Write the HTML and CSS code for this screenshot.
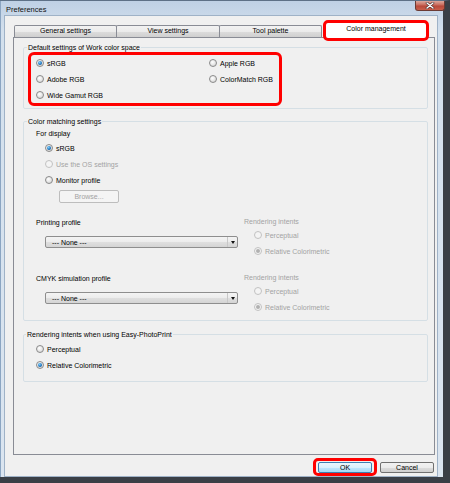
FILE: index.html
```html
<!DOCTYPE html>
<html lang="en">
<head>
    <meta charset="UTF-8">
    <title>Preferences</title>
    <link rel="stylesheet" href="styles.css">
</head>
<body>
    <div class="window">
        <div class="titlebar">
            <span class="title">Preferences</span>
            <span class="close-btn">
                <svg width="10" height="7" viewBox="0 0 10 7">
                    <path d="M2 1 L8 6 M8 1 L2 6" stroke="#4a2a2a" stroke-width="2.6" stroke-linecap="round"/>
                    <path d="M2 1 L8 6 M8 1 L2 6" stroke="#fff" stroke-width="1.4" stroke-linecap="round"/>
                </svg>
            </span>
        </div>

        <div class="client">
            <div class="tabs">
                <div class="tab tab-general">General settings</div>
                <div class="tab tab-view">View settings</div>
                <div class="tab tab-tool">Tool palette</div>
                <div class="tab tab-color active marked">Color management</div>
            </div>

            <div class="panel">
                <fieldset class="group group-work">
                    <legend>Default settings of Work color space</legend>
                    <div class="highlight-box">
                        <div class="work-grid">
                            <div class="option"><span class="radio checked"></span>sRGB</div>
                            <div class="option"><span class="radio"></span>Apple RGB</div>
                            <div class="option"><span class="radio"></span>Adobe RGB</div>
                            <div class="option"><span class="radio"></span>ColorMatch RGB</div>
                            <div class="option"><span class="radio"></span>Wide Gamut RGB</div>
                        </div>
                    </div>
                </fieldset>

                <fieldset class="group group-matching">
                    <legend>Color matching settings</legend>
                    <div class="caption">For display</div>
                    <div class="indent">
                        <div class="option"><span class="radio checked"></span>sRGB</div>
                        <div class="option disabled"><span class="radio"></span>Use the OS settings</div>
                        <div class="option"><span class="radio"></span>Monitor profile</div>
                        <button class="btn btn-browse" disabled>Browse...</button>
                    </div>

                    <div class="profile-row">
                        <div class="profile-left">
                            <div class="caption">Printing profile</div>
                            <div class="combo"><span class="combo-text">--- None ---</span><span class="combo-arrow"></span></div>
                        </div>
                        <div class="profile-right disabled">
                            <div class="intent-caption">Rendering intents</div>
                            <div class="intent-list">
                                <div class="option"><span class="radio"></span>Perceptual</div>
                                <div class="option"><span class="radio checked"></span>Relative Colorimetric</div>
                            </div>
                        </div>
                    </div>

                    <div class="profile-row">
                        <div class="profile-left">
                            <div class="caption">CMYK simulation profile</div>
                            <div class="combo"><span class="combo-text">--- None ---</span><span class="combo-arrow"></span></div>
                        </div>
                        <div class="profile-right disabled">
                            <div class="intent-caption">Rendering intents</div>
                            <div class="intent-list">
                                <div class="option"><span class="radio"></span>Perceptual</div>
                                <div class="option"><span class="radio checked"></span>Relative Colorimetric</div>
                            </div>
                        </div>
                    </div>
                </fieldset>

                <fieldset class="group group-easy">
                    <legend>Rendering intents when using Easy-PhotoPrint</legend>
                    <div class="option"><span class="radio"></span>Perceptual</div>
                    <div class="option"><span class="radio checked"></span>Relative Colorimetric</div>
                </fieldset>
            </div>

            <div class="buttons">
                <button class="btn btn-default marked">OK</button>
                <button class="btn">Cancel</button>
            </div>
        </div>
    </div>
</body>
</html>
```

FILE: styles.css
```css
* {
    box-sizing: border-box;
}
body {
    margin: 0;
    font-family: "Liberation Sans", Arial, sans-serif;
    font-size: 7px;
    color: #000;
}
.window {
    width: 450px;
    height: 483px;
    display: flex;
    flex-direction: column;
    background: linear-gradient(#bfd1e5, #d3e0ed 30px, #dbe5f0);
    border-top: 1px solid #5e7187;
    border-right: 7px solid #3a3f46;
    border-bottom: 6px solid #3a3f46;
    box-shadow: inset 1px 0 #8ba5c2;
}
.titlebar {
    flex: none;
    height: 15px;
    display: flex;
    align-items: flex-start;
}
.title {
    padding: 4px 0 0 6px;
    font-size: 7.5px;
    line-height: 9px;
    color: #111;
}
.close-btn {
    margin-left: auto;
    margin-right: -2px;
    width: 30px;
    height: 10px;
    display: flex;
    align-items: center;
    justify-content: center;
    border: 1px solid #6b3b34;
    border-top: none;
    border-radius: 0 0 3px 3px;
    background: linear-gradient(#dca89d, #c86a5c 45%, #b8483a 55%, #c9604c);
}
.client {
    flex: 1;
    margin: 0 6px 1px 5px;
    padding-top: 6px;
    display: flex;
    flex-direction: column;
    background: #f0f0f0;
    box-shadow: 0 0 0 1px #9fb2c7;
}

/* tab strip */
.tabs {
    position: relative;
    z-index: 1;
    display: flex;
    align-items: flex-end;
    height: 15px;
    margin-left: 9px;
}
.tab {
    height: 12px;
    border: 1px solid #898c95;
    border-bottom: none;
    border-radius: 2px 2px 0 0;
    background: linear-gradient(#f2f2f2, #ebebeb 50%, #dddddd 50%, #cfcfcf);
    text-align: center;
    line-height: 9px;
}
.tab + .tab {
    margin-left: -1px;
}
.tab-general {
    width: 103px;
}
.tab-view {
    width: 104px;
}
.tab-tool {
    width: 103px;
}
.tab.active {
    width: 102px;
    height: 16px;
    margin-left: 3px;
    margin-bottom: -1px;
    background: #fff;
    line-height: 12px;
}
.marked {
    position: relative;
}
.marked::after {
    content: "";
    position: absolute;
    left: -3px;
    right: -3px;
    top: -3px;
    bottom: -3px;
    border: 3px solid #f00;
    border-radius: 5px;
}

.panel {
    flex: none;
    height: 418px;
    margin: 0 2px 0 8px;
    padding: 5px 6px 0 9px;
    border: 1px solid #898c95;
    background: #f0f0f0;
}

/* group boxes */
.group {
    margin: 0;
    padding: 0;
    min-width: 0;
    border: 1px solid #d5dfe5;
    border-radius: 2px;
}
.group legend {
    margin-left: 3px;
    padding: 0 1px;
    height: 9px;
    line-height: 9px;
}
.group-work {
    padding-bottom: 2px;
}
.group-matching {
    margin-top: 8px;
    padding: 2px 0 5px 12px;
}
.group-matching legend {
    margin-left: -9px;
}
.group-easy {
    margin-top: 9px;
    padding: 2px 0 8px 12px;
}
.group-easy legend {
    margin-left: -10px;
}

.highlight-box {
    width: 254px;
    margin-left: 4px;
    padding-left: 5px;
    border: 3px solid #f00;
    border-radius: 6px;
}
.work-grid {
    display: grid;
    grid-template-columns: 173px 1fr;
}

.option {
    height: 16px;
    display: flex;
    align-items: center;
    gap: 3px;
    white-space: nowrap;
}
.radio {
    position: relative;
    flex: none;
    width: 8px;
    height: 8px;
    border: 1px solid #8a8a8a;
    border-radius: 50%;
    background: radial-gradient(circle at 40% 35%, #ffffff, #e2e2e2 60%, #c9c9c9);
}
.radio.checked::after {
    content: "";
    position: absolute;
    left: 1px;
    top: 1px;
    width: 4px;
    height: 4px;
    border-radius: 50%;
    background: radial-gradient(circle at 40% 35%, #7fd0ff, #1a6fb8 60%, #0d3f78);
}
.disabled {
    color: #a3a3a3;
}
.disabled .radio {
    border-color: #c2c2c2;
    background: #f4f4f4;
}
.disabled .radio.checked::after {
    background: #b0b0b0;
}

.caption {
    height: 12px;
    line-height: 12px;
}
.indent {
    margin-left: 9px;
}

/* buttons */
.btn {
    display: block;
    height: 11px;
    padding: 0;
    font-family: inherit;
    font-size: 7px;
    line-height: 9px;
    color: #000;
    border: 1px solid #707070;
    border-radius: 2px;
    background: linear-gradient(#f2f2f2, #ebebeb 50%, #dddddd 50%, #cfcfcf);
}
.btn-browse {
    width: 60px;
    height: 13px;
    margin: 2px 0 0 14px;
    color: #a3a3a3;
    border-color: #bdbdbd;
    background: #f4f4f4;
}
.buttons {
    display: flex;
    justify-content: flex-end;
    gap: 8px;
    margin-top: 7px;
    padding-right: 3px;
}
.buttons .btn {
    width: 54px;
}
.btn-default {
    border-color: #3c7fb1;
    background: linear-gradient(#eaf6fd, #d9f0fc 50%, #bee6fd 50%, #a7d9f5);
}
.btn-default::after {
    left: -6px;
    right: -6px;
    top: -5px;
    bottom: -4px;
}

/* profile rows with rendering intents */
.profile-row {
    display: flex;
    margin-top: 14px;
}
.profile-left {
    width: 202px;
}
.combo {
    display: flex;
    align-items: center;
    width: 193px;
    height: 12px;
    margin: 7px 0 0 9px;
    border: 1px solid #8e8e8e;
    border-radius: 2px;
    background: linear-gradient(#f4f4f4, #ececec 50%, #e0e0e0 50%, #d4d4d4);
}
.combo-text {
    flex: 1;
    padding-left: 6px;
}
.combo-arrow {
    width: 10px;
    height: 10px;
    border-left: 1px solid #c8c8c8;
    display: flex;
    align-items: center;
    justify-content: center;
}
.combo-arrow::before {
    content: "";
    border-left: 2.5px solid transparent;
    border-right: 2.5px solid transparent;
    border-top: 3px solid #111;
}
.profile-right {
    margin-left: 6px;
}
.intent-caption {
    height: 10px;
    line-height: 10px;
}
.intent-list {
    margin-left: 10px;
}
```
